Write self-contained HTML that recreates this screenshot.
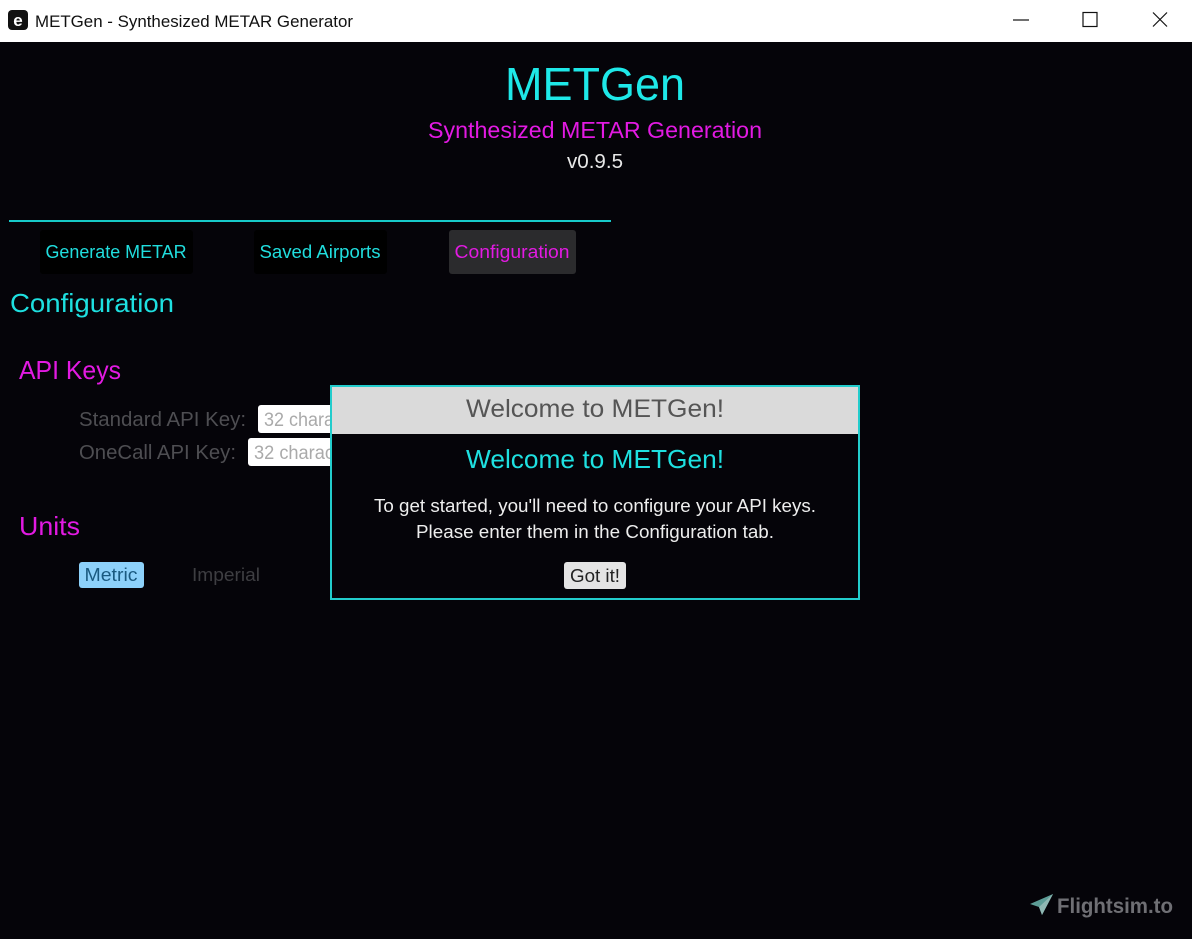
<!DOCTYPE html>
<html><head><meta charset="utf-8"><style>
*{margin:0;padding:0;box-sizing:border-box}
html,body{width:1192px;height:939px;overflow:hidden;background:#050409;font-family:"Liberation Sans",sans-serif}
svg{position:absolute;left:0;top:0}
</style></head><body>
<svg width="1192" height="939" xmlns="http://www.w3.org/2000/svg" font-family="Liberation Sans, sans-serif">
<rect x="0" y="0" width="1192" height="42" fill="#fff"/>
<rect x="8" y="10" width="20" height="20" rx="4" fill="#111"/>
<text x="18" y="26" font-size="17" fill="#fff" text-anchor="middle" font-weight="bold">e</text>
<text x="35" y="27" font-size="17" fill="#111" textLength="318" lengthAdjust="spacingAndGlyphs">METGen - Synthesized METAR Generator</text>
<line x1="1013" y1="20" x2="1029" y2="20" stroke="#111" stroke-width="1.2"/>
<rect x="1083" y="12.5" width="14" height="14" fill="none" stroke="#111" stroke-width="1.2"/>
<path d="M1153 12.5 L1167 26.5 M1167 12.5 L1153 26.5" stroke="#111" stroke-width="1.2"/>

<text x="595" y="100" font-size="46" fill="#1ee8e8" text-anchor="middle" textLength="180" lengthAdjust="spacingAndGlyphs">METGen</text>
<text x="595" y="138" font-size="23" fill="#e21ae2" text-anchor="middle" textLength="334" lengthAdjust="spacingAndGlyphs">Synthesized METAR Generation</text>
<text x="595" y="168" font-size="20" fill="#e8e8e8" text-anchor="middle" textLength="56" lengthAdjust="spacingAndGlyphs">v0.9.5</text>
<rect x="9" y="220" width="602" height="2" fill="#17caca"/>

<rect x="40" y="230" width="153" height="44" rx="3" fill="#000"/>
<text x="116" y="258" font-size="18" fill="#20dede" text-anchor="middle" textLength="141" lengthAdjust="spacingAndGlyphs">Generate METAR</text>
<rect x="254" y="230" width="133" height="44" rx="3" fill="#000"/>
<text x="320" y="258" font-size="18" fill="#20dede" text-anchor="middle" textLength="121" lengthAdjust="spacingAndGlyphs">Saved Airports</text>
<rect x="449" y="230" width="127" height="44" rx="3" fill="#2b2b2d"/>
<text x="512" y="258" font-size="18" fill="#e21ae2" text-anchor="middle" textLength="115" lengthAdjust="spacingAndGlyphs">Configuration</text>

<text x="10" y="312" font-size="26" fill="#1ee0e0" textLength="164" lengthAdjust="spacingAndGlyphs">Configuration</text>
<text x="19" y="379" font-size="26" fill="#e21ae2" textLength="102" lengthAdjust="spacingAndGlyphs">API Keys</text>
<text x="79" y="426" font-size="20" fill="#4e4e52" textLength="167" lengthAdjust="spacingAndGlyphs">Standard API Key:</text>
<rect x="258" y="405" width="90" height="28" rx="3" fill="#fff"/>
<text x="264" y="426" font-size="19" fill="#aaa" textLength="70" lengthAdjust="spacingAndGlyphs">32 chara</text>
<text x="79" y="459" font-size="20" fill="#4e4e52" textLength="157" lengthAdjust="spacingAndGlyphs">OneCall API Key:</text>
<rect x="248" y="438" width="100" height="28" rx="3" fill="#fff"/>
<text x="254" y="459" font-size="19" fill="#aaa" textLength="80" lengthAdjust="spacingAndGlyphs">32 charac</text>

<text x="19" y="535" font-size="26" fill="#e21ae2" textLength="61" lengthAdjust="spacingAndGlyphs">Units</text>
<rect x="79" y="562" width="65" height="26" rx="3" fill="#8dd1fa"/>
<text x="111" y="581" font-size="18" fill="#1a5a80" text-anchor="middle" textLength="53" lengthAdjust="spacingAndGlyphs">Metric</text>
<text x="192" y="581" font-size="18" fill="#3e3e42" textLength="68" lengthAdjust="spacingAndGlyphs">Imperial</text>

<rect x="331" y="386" width="528" height="213" fill="#050409" stroke="#22cccc" stroke-width="2"/>
<rect x="332" y="387" width="526" height="47" fill="#dadada"/>
<text x="595" y="417" font-size="25" fill="#555" text-anchor="middle" textLength="258" lengthAdjust="spacingAndGlyphs">Welcome to METGen!</text>
<text x="595" y="468" font-size="26" fill="#1ee0e0" text-anchor="middle" textLength="258" lengthAdjust="spacingAndGlyphs">Welcome to METGen!</text>
<text x="595" y="512" font-size="18" fill="#eee" text-anchor="middle" textLength="442" lengthAdjust="spacingAndGlyphs">To get started, you'll need to configure your API keys.</text>
<text x="595" y="538" font-size="18" fill="#eee" text-anchor="middle" textLength="358" lengthAdjust="spacingAndGlyphs">Please enter them in the Configuration tab.</text>
<rect x="564" y="562" width="62" height="27" rx="3" fill="#e4e4e4"/>
<text x="595" y="582" font-size="18" fill="#222" text-anchor="middle" textLength="50" lengthAdjust="spacingAndGlyphs">Got it!</text>

<path d="M1030 904 L1053 894 L1042 915 L1039 907 Z" fill="#5d9d97"/>
<path d="M1039 907 L1053 894 L1042 915 Z" fill="#8fb7b3"/>
<text x="1057" y="913" font-size="21" font-weight="bold" fill="#6f6f74" textLength="116" lengthAdjust="spacingAndGlyphs">Flightsim.to</text>
</svg>
</body></html>
